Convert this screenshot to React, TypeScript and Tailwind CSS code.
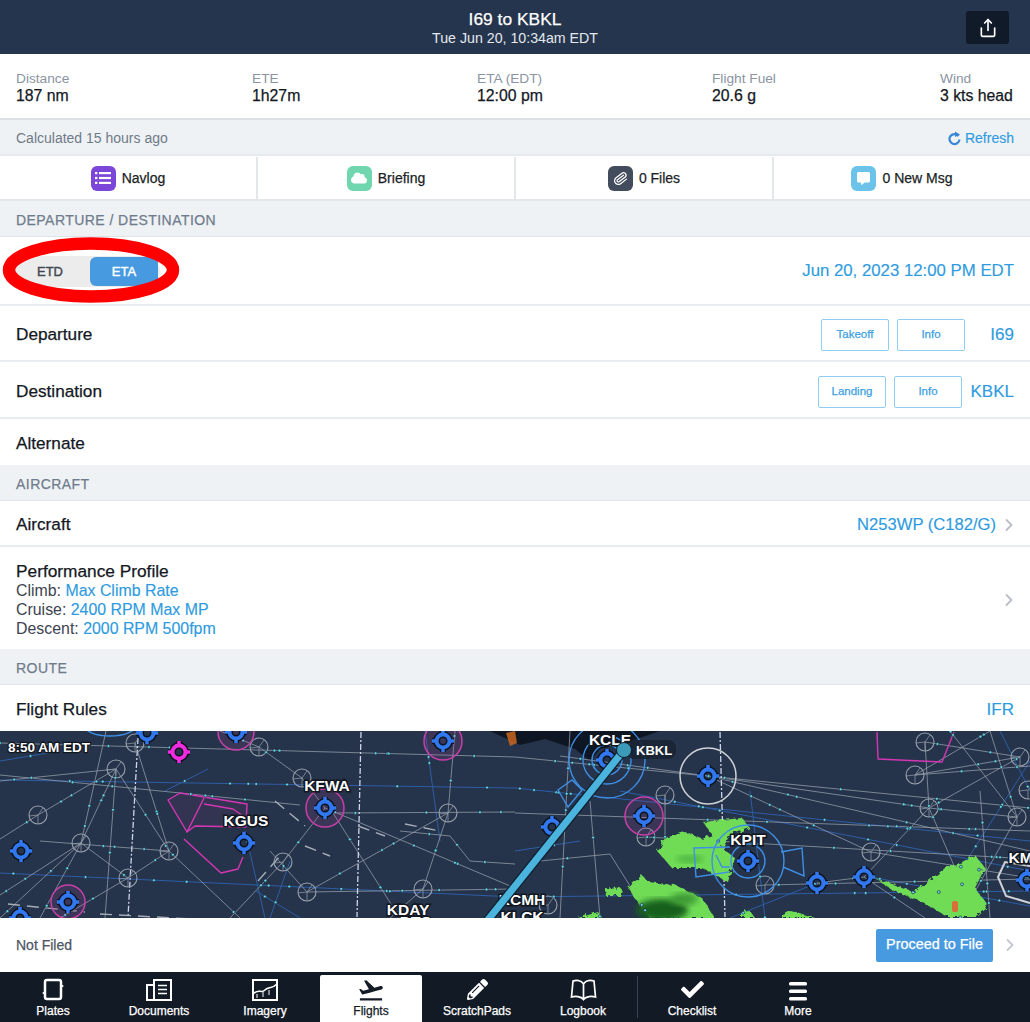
import { Share, Paperclip, ChevronRight } from 'lucide-react'
import { FaCloud, FaCheck, FaPencilAlt, FaCommentAlt } from 'react-icons/fa'
import { MdFlightTakeoff } from 'react-icons/md'

const font = 'font-["Liberation_Sans",Arial,sans-serif]'
const medium = '[-webkit-text-stroke:0.25px_currentColor]'
const link = 'text-[#2e9be0] [-webkit-text-stroke:0.15px_currentColor]'

const stats = [
  { label: 'Distance', value: '187 nm' },
  { label: 'ETE', value: '1h27m' },
  { label: 'ETA (EDT)', value: '12:00 pm' },
  { label: 'Flight Fuel', value: '20.6 g' },
  { label: 'Wind', value: '3 kts head' },
]

const grayLines = [
  [0, 12, 515, 26], [0, 44, 300, 74], [325, 77, 515, 157], [333, 82, 515, 81], [81, 112, 0, 164], [81, 112, 116, 38],
  [81, 112, 128, 147], [81, 112, 0, 187], [81, 112, 40, 187], [81, 112, 106, 0], [38, 84, 0, 108], [38, 84, 116, 38],
  [116, 38, 169, 120], [116, 38, 0, 50], [116, 38, 105, 187], [169, 120, 40, 110], [169, 120, 240, 187], [169, 120, 135, 12],
  [128, 147, 169, 120], [128, 147, 60, 187], [259, 16, 302, 47], [259, 16, 220, 0], [302, 47, 325, 77], [283, 131, 325, 77],
  [283, 131, 230, 187], [307, 161, 448, 82], [307, 161, 515, 158], [307, 161, 270, 120], [423, 158, 448, 82], [423, 158, 390, 187],
  [448, 82, 455, 0], [333, 82, 400, 187], [400, 100, 450, 105], [450, 105, 470, 130], [470, 130, 515, 133], [540, 130, 610, 123],
  [610, 123, 650, 187], [515, 26, 1030, 77], [560, 25, 708, 45], [708, 45, 929, 77], [665, 64, 665, 110], [708, 45, 1030, 120],
  [515, 82, 1030, 100], [646, 106, 1030, 128], [871, 121, 1030, 147], [765, 154, 1030, 148], [817, 152, 864, 146], [864, 146, 929, 77],
  [864, 146, 925, 187], [929, 77, 925, 11], [929, 77, 965, 160], [925, 11, 1020, 26], [1020, 26, 929, 77], [1017, 86, 929, 77],
  [1017, 86, 950, 0], [990, 0, 1017, 86], [980, 60, 990, 187], [1020, 26, 915, 44], [915, 44, 1030, 35], [871, 121, 708, 45],
  [570, 0, 560, 187], [590, 70, 600, 187], [1017, 86, 960, 187], [915, 44, 990, 0],
]

const blueLines = [
  [0, 49, 515, 57], [0, 142, 515, 166], [208, 38, 165, 60], [256, 160, 300, 187], [290, 130, 270, 187], [425, 0, 440, 110],
  [515, 166, 1030, 160], [515, 57, 1030, 110], [620, 60, 1030, 140], [750, 60, 765, 187], [1030, 30, 960, 140], [870, 146, 1030, 175],
  [730, 187, 817, 152], [1000, 0, 1030, 60], [0, 30, 60, 20], [245, 100, 265, 187], [515, 120, 580, 110],
]

const whiteDash = [
  [138, 7, 128, 186], [361, 1, 357, 186], [720, 1, 725, 186],
]

const vors = [
  [38, 84], [81, 112], [169, 120], [128, 147], [116, 38], [259, 16], [302, 47], [448, 82], [283, 131], [307, 161], [423, 158], [135, 12],
  [665, 64], [925, 11], [915, 44], [929, 77], [1020, 26], [1017, 86], [871, 121], [646, 106], [548, 174], [765, 154], [1028, 59],
]

// blue airports, with an optional ring colour and radius
const airports: [number, number, string?, number?][] = [
  [147, 2], [443, 10, '#c93fa8', 19], [325, 77, '#c93fa8', 19], [244, 112], [21, 120], [68, 171, '#c93fa8', 17], [20, 187],
  [236, 1, '#c93fa8', 18], [607, 29], [708, 45], [644, 85, '#c93fa8', 19], [552, 96], [748, 130], [817, 152], [864, 146], [1027, 149],
]

// seeded so the waypoints land in the same place on every run
function waypoints() {
  const dots: [number, number][] = []
  let seed = 7
  const next = () => {
    seed = (seed * 16807) % 2147483647
    return seed / 2147483647
  }
  for (const [x1, y1, x2, y2] of [...grayLines, ...blueLines]) {
    const len = Math.hypot(x2 - x1, y2 - y1)
    const count = Math.round(len / 50)
    for (let i = 0; i < count; i++) {
      const t = next()
      dots.push([x1 + (x2 - x1) * t, y1 + (y2 - y1) * t])
    }
  }
  return dots
}

function Airport({ x, y, ring, r }: { x: number; y: number; ring?: string; r?: number }) {
  const ticks = `M${x} ${y - 11}V${y - 7}M${x} ${y + 7}V${y + 11}M${x - 11} ${y}H${x - 7}M${x + 7} ${y}H${x + 11}`
  return (
    <g>
      {ring && <circle cx={x} cy={y} r={r} fill="#c93fa822" stroke={ring} strokeWidth="1.5" />}
      <circle cx={x} cy={y} r="6.5" fill="none" stroke="#0d1420" strokeWidth="7" />
      <path d={ticks} stroke="#0d1420" strokeWidth="6" />
      <circle cx={x} cy={y} r="6.5" fill="none" stroke="#3178f0" strokeWidth="4" />
      <path d={ticks} stroke="#3178f0" strokeWidth="3.5" />
    </g>
  )
}

function MapLabel({ x, y, children }: { x: number; y: number; children: string }) {
  return (
    <text x={x} y={y} textAnchor="middle" fontSize="15.5" fontWeight="700" fill="#fff" stroke="#11161f" strokeWidth="3" paintOrder="stroke" style={{ fontFamily: 'Liberation Sans' }}>
      {children}
    </text>
  )
}

function SectionMap() {
  return (
    <svg viewBox="0 0 1030 187" className="block w-full h-[187px] bg-[#25344b]">
      <defs>
        <filter id="rough" x="-10%" y="-10%" width="120%" height="120%">
          <feTurbulence type="fractalNoise" baseFrequency="0.22" numOctaves="2" seed="4" />
          <feDisplacementMap in="SourceGraphic" scale="7" />
        </filter>
        <filter id="soft"><feGaussianBlur stdDeviation="3" /></filter>
      </defs>

      <path d="M490 0L520 14L545 8L575 18L590 30L600 18L625 12L660 0Z" fill="#0d1622" />
      <path d="M506 2L515 0L517 12L510 15Z" fill="#c9641f" opacity=".85" />

      {blueLines.map(([a, b, c, d], i) => (
        <line key={i} x1={a} y1={b} x2={c} y2={d} stroke="#2e5da6" strokeWidth="1" />
      ))}
      {grayLines.map(([a, b, c, d], i) => (
        <line key={i} x1={a} y1={b} x2={c} y2={d} stroke="#98a0ad" strokeWidth="1" opacity=".75" />
      ))}
      {whiteDash.map(([a, b, c, d], i) => (
        <line key={i} x1={a} y1={b} x2={c} y2={d} stroke="#cfd4ea" strokeWidth="1.3" strokeDasharray="6 2 2 2" />
      ))}
      <path d="M8 173L85 181M100 183L230 190M275 70L305 95M305 115L330 125M358 95L385 105M405 93L440 100M258 150L280 125" stroke="#a6adb8" strokeWidth="1.4" strokeDasharray="12 7" fill="none" />

      {vors.map(([x, y], i) => (
        <g key={i} stroke="#98a0ad" fill="none" strokeWidth="1.1">
          <circle cx={x} cy={y} r="9" />
          <path d={`M${x} ${y}L${x + 5} ${y - 7}M${x} ${y}V${y + 9}M${x} ${y}L${x - 9} ${y + 1}`} strokeWidth=".7" />
        </g>
      ))}

      {/* restricted airspace */}
      <g fill="#c93fa814" stroke="#d636b4" strokeWidth="1.4" strokeLinejoin="round">
        <path d="M168 69L180 62L247 73L246 96L195 95L187 101Z" />
        <path d="M204 67L187 101M204 73L233 78L246 87" fill="none" />
        <path d="M184 108L221 142L238 138L243 126" fill="none" />
        <path d="M877 1L878 28L942 31L954 1" fill="none" />
      </g>

      {/* rain */}
      <g filter="url(#rough)" fill="#6fdc56">
        <path d="M703 91L742 87L750 97L730 104L722 117L735 127L728 151L702 137L672 137L658 121L665 107L685 101L702 108L712 104Z" />
        <path d="M628 157L642 144L648 151L675 154L702 167L715 187L650 187L640 175Z" />
        <path d="M605 157L622 158L620 165L606 165Z" />
        <path d="M578 187L598 181L602 187Z" />
        <path d="M782 183L790 179L815 187L782 187Z" />
        <path d="M742 181L750 180L755 187L742 187Z" />
        <path d="M875 147L915 161L945 137L962 131L975 124L985 137L975 157L988 174L975 186L948 186L922 171L892 159Z" />
      </g>
      <ellipse cx="662" cy="179" rx="26" ry="11" fill="#14601c" filter="url(#soft)" />
      <ellipse cx="684" cy="168" rx="14" ry="6" fill="#3c9a34" filter="url(#soft)" />
      <ellipse cx="690" cy="128" rx="14" ry="4" fill="#4db842" filter="url(#soft)" />
      <rect x="952" y="170" width="6" height="11" rx="2" fill="#d9703a" />

      {waypoints().map(([x, y], i) => (
        <circle key={i} cx={x} cy={y} r="1.5" fill="#64d6e2" stroke="#152033" strokeWidth=".6" />
      ))}

      {/* class B / C rings */}
      <g fill="none" stroke="#3f8fe6" strokeWidth="1.4">
        <circle cx="607" cy="29" r="38" />
        <circle cx="607" cy="29" r="24" />
        <circle cx="607" cy="29" r="15" />
        <path d="M558 59L572 49L582 59L568 76Z" />
        <circle cx="748" cy="130" r="36" />
        <circle cx="748" cy="130" r="17" />
        <path d="M730 116L694 117L696 146L729 141M716 124L722 136L730 136M781 121L802 117L804 145L783 136" />
        <ellipse cx="110" cy="-6" rx="26" ry="11" />
      </g>
      <circle cx="708" cy="45" r="28" fill="none" stroke="#cfd2d6" strokeWidth="1.5" />
      <path d="M1030 135L1005 131L998 146L1006 165L1030 172" fill="none" stroke="#cfd2d6" strokeWidth="2" />

      {airports.map(([x, y, ring, r], i) => (
        <Airport key={i} x={x} y={y} ring={ring} r={r} />
      ))}
      <circle cx="179" cy="21" r="6.5" fill="none" stroke="#0d1420" strokeWidth="7" />
      <path d="M179 10V14M179 28V32M168 21H172M186 21H190" stroke="#0d1420" strokeWidth="6" />
      <circle cx="179" cy="21" r="6.5" fill="none" stroke="#f02be0" strokeWidth="4" />
      <path d="M179 10V14M179 28V32M168 21H172M186 21H190" stroke="#f02be0" strokeWidth="3.5" />

      <MapLabel x={610} y={14}>KCLE</MapLabel>
      <MapLabel x={327} y={60}>KFWA</MapLabel>
      <MapLabel x={246} y={95}>KGUS</MapLabel>
      <MapLabel x={748} y={114}>KPIT</MapLabel>
      <MapLabel x={408} y={184}>KDAY</MapLabel>
      <MapLabel x={416} y={196}>DTO</MapLabel>
      <MapLabel x={522} y={174}>KCMH</MapLabel>
      <MapLabel x={522} y={191}>KLCK</MapLabel>
      <MapLabel x={1034} y={132}>KMGW</MapLabel>

      {/* route */}
      <line x1="624" y1="19" x2="487" y2="190" stroke="#10202e" strokeWidth="9.5" />
      <line x1="624" y1="19" x2="487" y2="190" stroke="#4ab3de" strokeWidth="7" />
      <rect x="626" y="9" width="50" height="19" rx="8" fill="#1a2433" opacity=".9" />
      <circle cx="624" cy="19" r="7.5" fill="#3a9ab8" stroke="#10202e" strokeWidth="1" />
      <text x="636" y="23.5" fontSize="13" fontWeight="700" fill="#fff" style={{ fontFamily: 'Liberation Sans' }}>KBKL</text>

      <text x="8" y="21" fontSize="13.5" fontWeight="700" fill="#fff" stroke="#11161f" strokeWidth="2.5" paintOrder="stroke" style={{ fontFamily: 'Liberation Sans' }}>8:50 AM EDT</text>
    </svg>
  )
}

function SectionHeader({ title }: { title: string }) {
  return (
    <div className="h-[36px] pt-[3px] flex items-center px-4 bg-[#eff2f5] border-b border-[#dfe4ea]">
      <span className={`text-[14px] tracking-[0.45px] text-[#6f7c8d] ${medium}`}>{title}</span>
    </div>
  )
}

function OutlineButton({ label }: { label: string }) {
  return (
    <button className={`w-[68px] h-[32px] rounded-[2px] border border-[#90cdf2] text-[11.5px] text-[#3d9fe0] flex items-center justify-center ${medium}`}>
      {label}
    </button>
  )
}

function AirportRow({ title, action, code, height, codeWidth }: { title: string; action: string; code: string; height: string; codeWidth: string }) {
  return (
    <div className={`${height} pt-[4px] flex items-center px-4 border-b-2 border-[#e8ecf1]`}>
      <span className={`text-[17.2px] text-[#14181f] ${medium}`}>{title}</span>
      <div className="ml-auto flex items-center gap-2">
        <OutlineButton label={action} />
        <OutlineButton label="Info" />
      </div>
      <span className={`${codeWidth} text-right text-[17px] ${link}`}>{code}</span>
    </div>
  )
}

function Tab({ color, icon, label }: { color: string; icon: React.ReactNode; label: string }) {
  return (
    <div className="flex-1 flex items-center justify-center gap-[6px] border-r-2 last:border-r-0 border-[#e3e7ec]">
      <span className={`w-[25px] h-[25px] rounded-[6px] flex items-center justify-center text-white ${color}`}>{icon}</span>
      <span className={`text-[14px] text-[#1b1f26] ${medium}`}>{label}</span>
    </div>
  )
}

function NavItem({ icon, label, active }: { icon: React.ReactNode; label: string; active?: boolean }) {
  return (
    <div className="w-[106px] h-full pt-[3px] px-[2px]">
      <div className={`h-full flex flex-col items-center rounded-t-[2px] ${active ? 'bg-white text-[#141b26]' : 'text-white'}`}>
        <div className="h-[26px] flex items-end justify-center">{icon}</div>
        <span className={`mt-[3px] text-[12px] leading-[14px] ${medium}`}>{label}</span>
      </div>
    </div>
  )
}

export default function App() {
  return (
    <div className={`w-[1030px] h-[1022px] overflow-hidden bg-white relative ${font}`}>
      <header className="h-[54px] bg-[#25354d] flex flex-col items-center justify-center relative text-white">
        <div className={`text-[17.4px] leading-[19px] mt-[3px] ${medium}`}>I69 to KBKL</div>
        <div className="text-[14.2px] leading-[19px] text-[#e4e8ee]">Tue Jun 20, 10:34am EDT</div>
        <button className="absolute right-[21px] top-[11px] w-[43px] h-[33px] rounded-[3px] bg-[#111a28] flex items-center justify-center">
          <Share size={20} strokeWidth={2} />
        </button>
      </header>

      <div className="h-[66px] pt-[2px] px-4 grid grid-cols-[236px_225px_235px_228px_1fr] content-center border-b-2 border-[#dde1e6]">
        {stats.map(s => (
          <div key={s.label}>
            <div className="text-[13.7px] leading-[17px] text-[#8a94a3]">{s.label}</div>
            <div className={`text-[15.8px] leading-[18px] text-[#14181f] ${medium}`}>{s.value}</div>
          </div>
        ))}
      </div>

      <div className="h-[36px] pt-[2px] px-4 bg-[#eff2f5] flex items-center justify-between border-b-2 border-[#e6eaee]">
        <span className="text-[14px] text-[#6f7a88]">Calculated 15 hours ago</span>
        <span className={`flex items-center gap-[4px] text-[14px] ${link}`}>
          <svg width="13" height="15" viewBox="0 0 13 15" fill="none" stroke="#3a87d6" strokeWidth="2.2">
            <path d="M10.5 5A5 5 0 1 0 11.5 8.5" />
            <path d="M7 .5L7 6L12 3.4Z" fill="#3a87d6" strokeWidth="0" />
          </svg>
          Refresh
        </span>
      </div>

      <div className="h-[45px] pt-[1px] flex border-b-2 border-[#e3e7ec]">
        <Tab
          color="bg-[#7c47d8]"
          label="Navlog"
          icon={
            <svg width="16" height="12" viewBox="0 0 16 12" fill="white">
              <rect x="0" y="0" width="2.4" height="2.2" /><rect x="4" y="0" width="12" height="2.2" />
              <rect x="0" y="4.9" width="2.4" height="2.2" /><rect x="4" y="4.9" width="12" height="2.2" />
              <rect x="0" y="9.8" width="2.4" height="2.2" /><rect x="4" y="9.8" width="12" height="2.2" />
            </svg>
          }
        />
        <Tab color="bg-[#6fd6ae]" label="Briefing" icon={<FaCloud size={16} />} />
        <Tab color="bg-[#434c5c]" label="0 Files" icon={<Paperclip size={15} className="rotate-[8deg]" />} />
        <Tab color="bg-[#6cc3ea]" label="0 New Msg" icon={<FaCommentAlt size={13} />} />
      </div>

      <SectionHeader title="DEPARTURE / DESTINATION" />

      <div className="h-[69px] pl-[15px] pr-4 flex items-center justify-between border-b-2 border-[#e8ecf1]">
        <div className="w-[145px] h-[31px] mt-[2px] rounded-full bg-[#ececec] flex items-center">
          <span className="w-[75px] pr-[5px] text-center text-[13px] text-[#3f4650] [-webkit-text-stroke:0.4px_currentColor]">ETD</span>
          <span className="w-[68px] h-[29px] rounded-[6px] bg-[#479ae0] text-white text-[13px] flex items-center justify-center [-webkit-text-stroke:0.4px_currentColor]">ETA</span>
        </div>
        <span className={`text-[16.8px] ${link}`}>Jun 20, 2023 12:00 PM EDT</span>
      </div>

      <AirportRow title="Departure" action="Takeoff" code="I69" height="h-[56px]" codeWidth="w-[49px]" />
      <AirportRow title="Destination" action="Landing" code="KBKL" height="h-[57px]" codeWidth="w-[52px]" />
      <div className="h-[46px] pt-[4px] flex items-center px-4">
        <span className={`text-[17.2px] text-[#14181f] ${medium}`}>Alternate</span>
      </div>

      <SectionHeader title="AIRCRAFT" />

      <div className="h-[46px] pt-[4px] flex items-center pl-4 pr-[11px] border-b-2 border-[#e8ecf1]">
        <span className={`text-[17.2px] text-[#14181f] ${medium}`}>Aircraft</span>
        <span className={`ml-auto text-[16.6px] ${link}`}>N253WP (C182/G)</span>
        <ChevronRight size={20} strokeWidth={2.2} className="ml-[3px] text-[#b9bec6]" />
      </div>

      <div className="h-[102px] pt-[4px] flex items-center pl-4 pr-[11px]">
        <div className="text-[15.9px] leading-[19px] text-[#3d4350]">
          <div className={`text-[17.3px] text-[#14181f] ${medium}`}>Performance Profile</div>
          <div>Climb: <span className={link}>Max Climb Rate</span></div>
          <div>Cruise: <span className={link}>2400 RPM Max MP</span></div>
          <div>Descent: <span className={link}>2000 RPM 500fpm</span></div>
        </div>
        <ChevronRight size={20} strokeWidth={2.2} className="ml-auto text-[#b9bec6]" />
      </div>

      <SectionHeader title="ROUTE" />

      <div className="h-[46px] pt-[4px] flex items-center justify-between px-4">
        <span className={`text-[17.2px] text-[#14181f] ${medium}`}>Flight Rules</span>
        <span className={`text-[17px] ${link}`}>IFR</span>
      </div>

      <SectionMap />

      <div className="h-[54px] flex items-center pl-4 pr-[10px]">
        <span className={`text-[14px] text-[#4c5563] ${medium}`}>Not Filed</span>
        <button className={`ml-auto w-[117px] h-[33px] rounded-[2px] bg-[#479ae0] text-white text-[14.4px] ${medium}`}>Proceed to File</button>
        <ChevronRight size={20} strokeWidth={2.2} className="ml-[7px] text-[#c4c8ce]" />
      </div>

      <nav className="h-[50px] bg-[#121a25] flex">
        <NavItem
          label="Plates"
          icon={
            <svg width="22" height="23" viewBox="0 0 22 23" fill="none" stroke="currentColor" strokeWidth="2.500">
              <rect x="3" y="2" width="16" height="19" rx="2" />
              <path d="M0 15L4 12.5V17.5ZM22 8L18 5.5V10.5Z" fill="currentColor" strokeWidth="0" />
            </svg>
          }
        />
        <NavItem
          label="Documents"
          icon={
            <svg width="26" height="22" viewBox="0 0 26 22" fill="none" stroke="currentColor" strokeWidth="2">
              <path d="M1 6H8V21H1ZM8 21H25V1H8V6" />
              <path d="M12 6.5H21M12 10.5H21M12 14.5H21" strokeWidth="1.6" />
            </svg>
          }
        />
        <NavItem
          label="Imagery"
          icon={
            <svg width="26" height="22" viewBox="0 0 26 22" fill="none" stroke="currentColor" strokeWidth="2">
              <rect x="1" y="1" width="24" height="20" />
              <path d="M1 15C7 9 9 15 13 11S19 11 25 5" strokeWidth="1.6" />
              <path d="M5 15V19M11 13V18M17 11V16" strokeWidth="1" />
            </svg>
          }
        />
        <NavItem active label="Flights" icon={<MdFlightTakeoff size={28} className="-mb-[3px]" />} />
        <NavItem label="ScratchPads" icon={<FaPencilAlt size={21} className="mb-[1px]" />} />
        <NavItem
          label="Logbook"
          icon={
            <svg width="27" height="22" viewBox="0 0 27 22" fill="none" stroke="currentColor" strokeWidth="1.7">
              <path d="M13.5 5C11 1 6 1 3 2L1.500 18C5 17 11 17 13.500 20.500C16 17 22 17 25.500 18L24 2C21 1 16 1 13.500 5ZM13.500 5V20" />
            </svg>
          }
        />
        <div className="w-[3px] shrink-0 flex justify-center py-[4px]"><div className="w-px h-[42px] bg-[#3a434f]" /></div>
        <NavItem label="Checklist" icon={<FaCheck size={23} />} />
        <NavItem
          label="More"
          icon={
            <svg width="18" height="19" viewBox="0 0 18 19" fill="currentColor">
              <rect y="0" width="18" height="3.600" rx="1.500" />
              <rect y="7.500" width="18" height="3.600" rx="1.500" />
              <rect y="15" width="18" height="3.600" rx="1.500" />
            </svg>
          }
        />
      </nav>

      {/* red annotation ring from the screenshot */}
      <svg className="absolute left-0 top-[235px] pointer-events-none" width="185" height="72" viewBox="0 0 185 72">
        <ellipse cx="91" cy="35" rx="82" ry="26.500" fill="none" stroke="#fe0000" strokeWidth="12.500" />
      </svg>
    </div>
  )
}
